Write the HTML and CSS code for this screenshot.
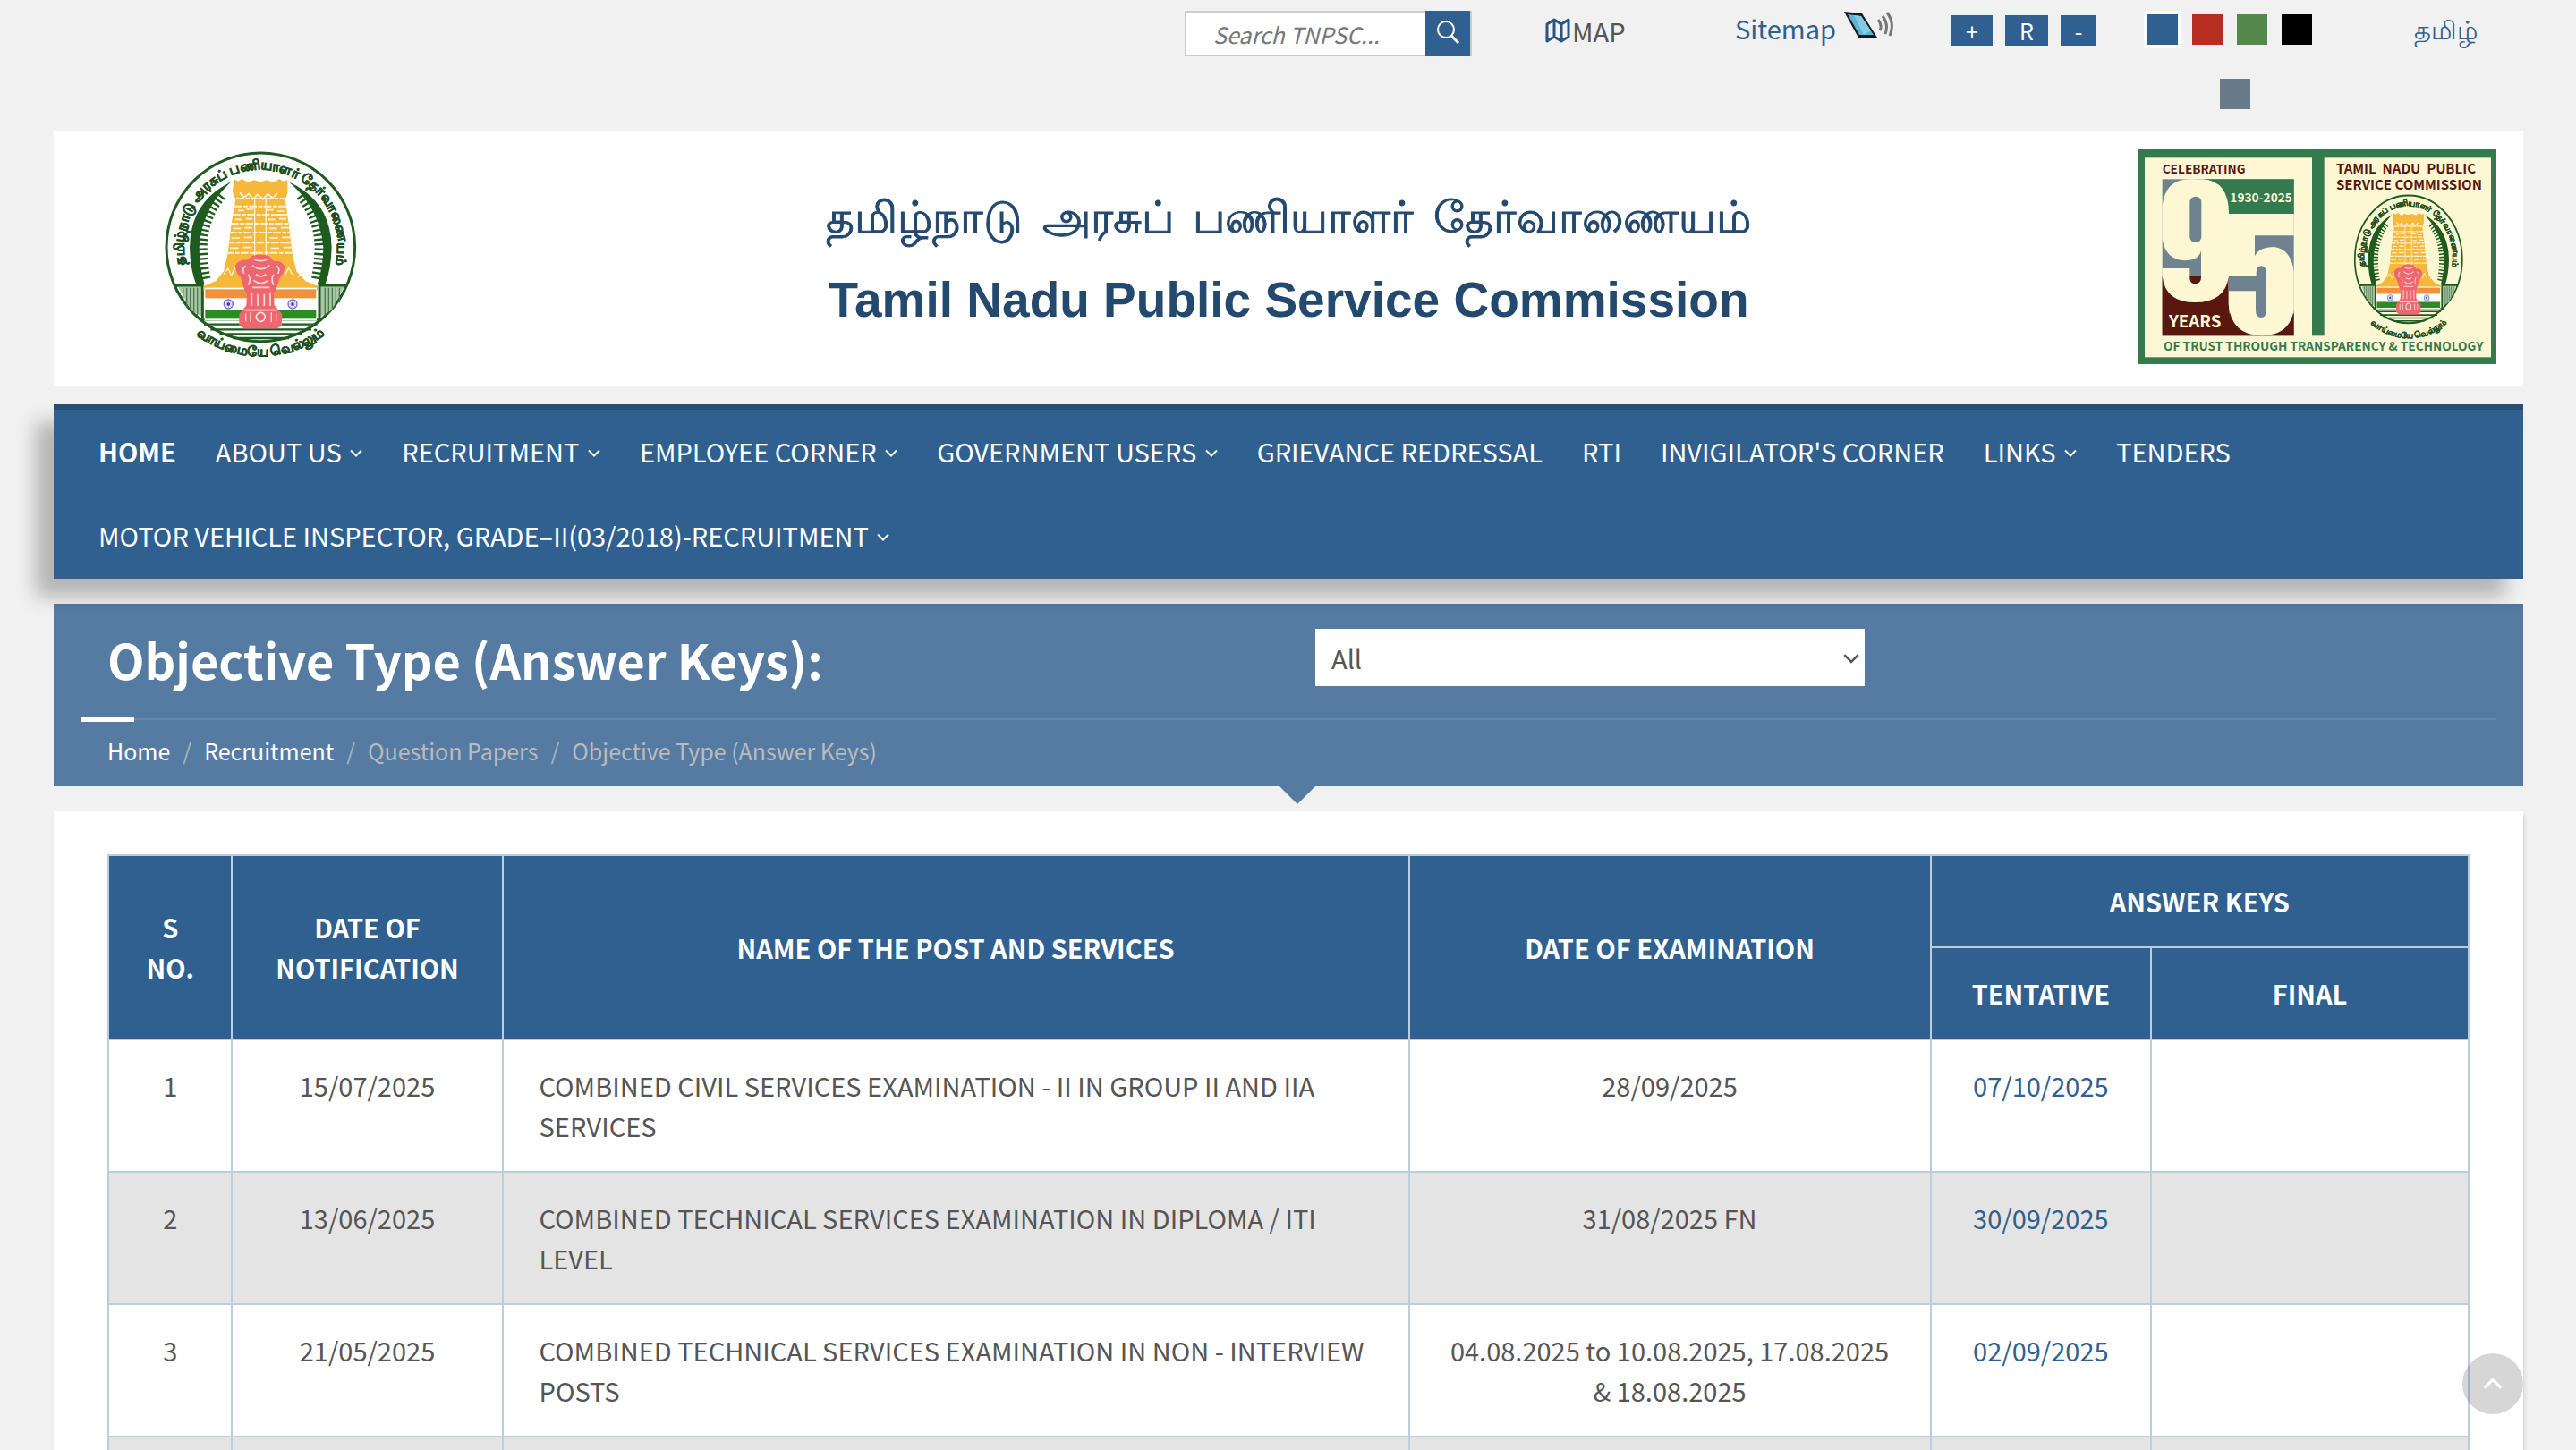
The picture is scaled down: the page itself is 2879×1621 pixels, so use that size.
FILE: index.html
```html
<!DOCTYPE html>
<html lang="en">
<head>
  <meta charset="UTF-8">
  <meta name="viewport" content="width=device-width, initial-scale=1.0">
  <title>TNPSC - Objective Type (Answer Keys)</title>
  <link rel="stylesheet" href="styles.css">
</head>
<body>

  <!-- shared drawings -->
  <svg class="defs" aria-hidden="true">
    <symbol id="chevron" viewBox="0 0 14 9">
      <path d="M1 1.500l6 6 6-6" fill="none" stroke="currentColor" stroke-width="2"/>
    </symbol>
    <symbol id="emblem" viewBox="60 45 672 720" preserveAspectRatio="none">
      <circle cx="394" cy="379" r="316" fill="none" stroke="#1f5b1f" stroke-width="9"/>
      <path d="M295 160Q158 225 156 380Q157 450 178 505H206Q188 440 188 380Q196 250 295 160ZM488 160Q630 225 632 380Q631 450 610 505H584Q604 440 604 380Q594 250 488 160Z" fill="#1f5b1f"/>
      <path d="M262 205Q200 280 198 380Q200 440 210 488M528 205Q590 280 592 380Q590 440 580 488" fill="none" stroke="#1f5b1f" stroke-width="34" stroke-dasharray="7 9"/>
      <path d="M106 508H200M590 508H682" stroke="#1f5b1f" stroke-width="9"/>
      <path d="M118 512H198V612L160 590ZM594 512H674L632 590L594 612Z" fill="#a9c4a6"/>
      <path d="M134 515v50M146 515v66M158 515v74M170 515v84M182 515v92M610 515v92M622 515v84M634 515v74M646 515v66M658 515v50" stroke="#4c7a49" stroke-width="4"/>
      <path d="M199 505V620M591 505V620" stroke="#1f5b1f" stroke-width="9"/>
      <path d="M188 622H330M464 622H600M204 638H330M464 638H584M226 655H564M256 670H532M300 684H490" stroke="#1f5b1f" stroke-width="7"/>
      <path d="M304 150l14 8 14-8 18 12 22-8 22 6 22-6 22 8 18-12 14 8 14-4v44l-8 22 12 80 12 100 14 60 30 32 42 18v14H202v-14l42-18 26-32 14-60 12-100 14-80-10-26Z" fill="#f6b83a"/>
      <path d="M312 216h162M306 242h174M300 270h188M294 300h204M288 330h214M282 364h226M278 398h232" stroke="#fff3cf" stroke-width="6" stroke-dasharray="26 5 14 4"/>
      <path d="M324 196l14 16 16-12 14 18 16-16 18 16 16-18 16 14 16-16M318 256h20M346 252h24M412 254h26M450 258h22M308 286h24M344 284h22M418 286h24M456 284h24M302 316h26M340 314h26M422 316h26M462 314h26M296 348h28M338 346h28M424 348h28M466 346h28M292 382h28M336 380h28M428 382h28M470 380h28" stroke="#fff6dd" stroke-width="5" fill="none"/>
      <path d="M374 220v190M412 220v190M270 470l14-20 12 24 14-30M500 470l-12-22-14 26M520 480l10-18" stroke="#fff3cf" stroke-width="4" fill="none"/>
      <rect x="206" y="515" width="376" height="110" fill="#ffffff"/>
      <rect x="208" y="520" width="372" height="30" fill="#f0923c"/>
      <rect x="208" y="590" width="372" height="29" fill="#2b8c22"/>
      <g fill="none" stroke="#6f70cf" stroke-width="4">
        <circle cx="286" cy="570" r="15"/><circle cx="501" cy="570" r="15"/>
        <path d="M272 570h28M286 556v28M276 560l20 20M296 560l-20 20M487 570h28M501 556v28M491 560l20 20M511 560l-20 20" stroke-width="2"/>
      </g>
      <circle cx="286" cy="570" r="5" fill="#35369b"/><circle cx="501" cy="570" r="5" fill="#35369b"/>
      <path d="M366 408q28-8 56 0l16 18q30-4 38 22l-8 22q-12 10-14 26l-10 26-6 14 2 38 26 30-2 38-14 10H338l-16-12v-36l24-30 2-38-8-14-10-30q-2-16-14-24l-8-24q10-26 40-22Z" fill="#ee6670"/>
      <path d="M372 420q22 10 44 0M366 440q28 24 58 0M344 442q-14 8-6 26M446 442q16 8 6 26M352 470q12 16 0 36M438 470q-12 16 0 36M378 470q16 14 34 0M370 490q24 20 50 0M366 514h58M364 530v46M384 536v40M406 536v40M426 530v46M340 590h108" fill="none" stroke="#ffd9da" stroke-width="5"/>
      <circle cx="394" cy="613" r="15" fill="#ee6670" stroke="#ffe3e3" stroke-width="5"/>
      <path d="M344 600v28M360 598v32M430 598v32M446 600v28" stroke="#ffd9da" stroke-width="4"/>
    </symbol>
  </svg>

  <div class="page">

    <div class="topbar">
      <form class="search" role="search">
        <input type="text" class="search-input" placeholder="Search TNPSC..." aria-label="Search TNPSC">
        <button type="button" class="search-btn" aria-label="Search">
          <svg width="28" height="28" viewBox="0 0 28 28"><circle cx="12" cy="11" r="9" fill="none" stroke="#fff" stroke-width="2"/><path d="M18 18l8 8" stroke="#fff" stroke-width="3"/></svg>
        </button>
      </form>

      <a href="#" class="map-link">
        <svg width="28" height="28" viewBox="0 0 28 28"><path d="M2 7l8-5 8 5 8-5v19l-8 5-8-5-8 5ZM10 2v19M18 7v19" fill="none" stroke="#2a557f" stroke-width="3" stroke-linejoin="round"/></svg>MAP
      </a>

      <div class="sitemap">
        <a href="#">Sitemap</a>
        <svg width="56" height="32" viewBox="0 0 56 32">
          <path d="M1 1L21 3 38 30H17Z" fill="#16181b"/>
          <path d="M5 4L20 6 34 27H18Z" fill="#5fb4d6"/>
          <path d="M12 5l8 1 11 16-8 5Z" fill="#86cbe4"/>
          <path d="M39 10q5 6 2 12M44 6q7 9 3 20M49 2q9 12 3 26" fill="none" stroke="#777" stroke-width="3"/>
        </svg>
      </div>

      <div class="font-size">
        <button type="button">+</button>
        <button type="button">R</button>
        <button type="button">-</button>
      </div>

      <div class="themes">
        <button type="button" class="swatch blue active" aria-label="Blue"></button>
        <button type="button" class="swatch red" aria-label="Red"></button>
        <button type="button" class="swatch green" aria-label="Green"></button>
        <button type="button" class="swatch black" aria-label="Black"></button>
        <button type="button" class="swatch gray" aria-label="Gray"></button>
      </div>

      <a href="#" class="lang" lang="ta">தமிழ்</a>
    </div>

    <header class="header">
      <svg class="emblem" viewBox="60 45 672 720" role="img" aria-label="Emblem">
        <use href="#emblem" x="60" y="45" width="672" height="720"/>
        <path id="arcTop" d="M155 475A258 258 0 1 1 633 475" fill="none"/>
        <path id="arcBottom" d="M120 620A365 365 0 0 0 668 620" fill="none"/>
        <text class="seal-text"><textPath href="#arcTop" startOffset="50%">தமிழ்நாடு அரசுப் பணியாளர் தேர்வாணையம்</textPath></text>
        <text class="seal-text"><textPath href="#arcBottom" startOffset="50%">வாய்மையே வெல்லும்</textPath></text>
      </svg>

      <div class="brand">
        <div class="brand-ta" lang="ta">தமிழ்நாடு &nbsp;அரசுப் &nbsp;பணியாளர் &nbsp;தேர்வாணையம்</div>
        <div class="brand-en">Tamil Nadu Public Service Commission</div>
      </div>

      <svg class="logo95" viewBox="60 50 1200 720" role="img" aria-label="Celebrating 95 years">
        <rect x="60" y="50" width="1200" height="720" fill="#35794f"/>
        <rect x="81" y="78" width="1161" height="669" fill="#fdf7d3"/>
        <rect x="642" y="70" width="41" height="605" fill="#35794f"/>
        <rect x="140" y="150" width="441" height="525" fill="#6e838f"/>
        <rect x="252" y="150" width="329" height="116" fill="#35794f"/>
        <path d="M140 475H363V600H581V675H140Z" fill="#5a170f"/>
        <path d="M140 240Q150 150 230 150H275Q363 156 363 265V475Q350 563 250 563Q150 563 140 475V449H232V485Q234 501 251 501Q270 500 270 480V390Q262 423 215 423Q150 420 140 350Z" fill="#fdf7d3"/>
        <rect x="232" y="208" width="39" height="154" rx="19" fill="#6e838f"/>
        <path d="M362 266H581V339H450V408Q465 377 515 377Q572 385 581 460V590Q565 675 472 675Q370 672 362 570Z" fill="#fdf7d3"/>
        <path d="M363 475H455V462Q457 441 472 441Q488 441 488 462V590Q488 614 472 614Q453 614 453 590V525H363Z" fill="#6e838f"/>
        <g class="logo-text">
          <text x="140" y="130" fill="#5a170f">CELEBRATING</text>
          <text x="367" y="228" fill="#fdf7d3">1930-2025</text>
          <text x="162" y="646" fill="#fdf7d3" class="years">YEARS</text>
          <text x="723" y="130" fill="#5a170f" class="org">TAMIL &#160;NADU &#160;PUBLIC</text>
          <text x="723" y="184" fill="#5a170f" class="org">SERVICE COMMISSION</text>
          <text x="144" y="726" fill="#35794f">OF TRUST THROUGH TRANSPARENCY &amp; TECHNOLOGY</text>
        </g>
        <use href="#emblem" x="775" y="192" width="383" height="488"/>
        <path id="ovalTop" d="M828 482A148 176 0 1 1 1102 482" fill="none"/>
        <path id="ovalBottom" d="M800 590A208 240 0 0 0 1130 590" fill="none"/>
        <text class="seal-text small"><textPath href="#ovalTop" startOffset="50%">தமிழ்நாடு அரசுப் பணியாளர் தேர்வாணையம்</textPath></text>
        <text class="seal-text small"><textPath href="#ovalBottom" startOffset="50%">வாய்மையே வெல்லும்</textPath></text>
      </svg>
    </header>

    <nav class="nav">
      <a href="#" class="active">HOME</a>
      <a href="#">ABOUT US <svg><use href="#chevron"/></svg></a>
      <a href="#">RECRUITMENT <svg><use href="#chevron"/></svg></a>
      <a href="#">EMPLOYEE CORNER <svg><use href="#chevron"/></svg></a>
      <a href="#">GOVERNMENT USERS <svg><use href="#chevron"/></svg></a>
      <a href="#">GRIEVANCE REDRESSAL</a>
      <a href="#">RTI</a>
      <a href="#">INVIGILATOR'S CORNER</a>
      <a href="#">LINKS <svg><use href="#chevron"/></svg></a>
      <a href="#">TENDERS</a>
      <a href="#">MOTOR VEHICLE INSPECTOR, GRADE–II(03/2018)-RECRUITMENT <svg><use href="#chevron"/></svg></a>
    </nav>

    <section class="page-title">
      <div class="title-row">
        <h1><label for="year">Objective Type (Answer Keys):</label></h1>
        <div class="select-wrap">
          <select id="year">
            <option>All</option>
          </select>
          <svg><use href="#chevron"/></svg>
        </div>
      </div>
      <ol class="breadcrumb">
        <li><a href="#">Home</a></li>
        <li><a href="#">Recruitment</a></li>
        <li>Question Papers</li>
        <li>Objective Type (Answer Keys)</li>
      </ol>
    </section>

    <main class="content">
      <table class="keys">
        <colgroup>
          <col class="c-no"><col class="c-date"><col class="c-name"><col class="c-exam"><col class="c-tent"><col class="c-final">
        </colgroup>
        <thead>
          <tr>
            <th rowspan="2">S NO.</th>
            <th rowspan="2">DATE OF NOTIFICATION</th>
            <th rowspan="2">NAME OF THE POST AND SERVICES</th>
            <th rowspan="2">DATE OF EXAMINATION</th>
            <th colspan="2">ANSWER KEYS</th>
          </tr>
          <tr>
            <th>TENTATIVE</th>
            <th>FINAL</th>
          </tr>
        </thead>
        <tbody>
          <tr>
            <td>1</td>
            <td>15/07/2025</td>
            <td class="name">COMBINED CIVIL SERVICES EXAMINATION - II IN GROUP II AND IIA SERVICES</td>
            <td>28/09/2025</td>
            <td><a href="#">07/10/2025</a></td>
            <td></td>
          </tr>
          <tr>
            <td>2</td>
            <td>13/06/2025</td>
            <td class="name">COMBINED TECHNICAL SERVICES EXAMINATION IN DIPLOMA / ITI LEVEL</td>
            <td>31/08/2025 FN</td>
            <td><a href="#">30/09/2025</a></td>
            <td></td>
          </tr>
          <tr>
            <td>3</td>
            <td>21/05/2025</td>
            <td class="name">COMBINED TECHNICAL SERVICES EXAMINATION IN NON - INTERVIEW POSTS</td>
            <td>04.08.2025 to 10.08.2025, 17.08.2025 &amp; 18.08.2025</td>
            <td><a href="#">02/09/2025</a></td>
            <td></td>
          </tr>
          <tr>
            <td></td>
            <td></td>
            <td class="name"></td>
            <td></td>
            <td></td>
            <td></td>
          </tr>
        </tbody>
      </table>
    </main>

  </div>

  <a href="#" class="to-top" aria-label="Back to top"><svg><use href="#chevron"/></svg></a>

</body>
</html>
```
FILE: styles.css
```css
* {
  box-sizing: border-box;
}
body {
  margin: 0;
  height: 100vh;
  overflow: hidden;
  background: #f1f1f1;
  color: #555;
  font-family: "Noto Sans CJK SC", "Noto Sans", sans-serif;
  font-size: 29px;
  line-height: 45px;
}
a {
  color: #2f6090;
  text-decoration: none;
}
button, input, select {
  font-family: inherit;
  border: 0;
  border-radius: 0;
  margin: 0;
  padding: 0;
}
.defs {
  display: none;
}
.page {
  padding: 0 59px 0 60px;
}

/* top bar */
.topbar {
  display: grid;
  grid-template-columns: 1264fr 403fr 212fr 242fr 215fr 302fr 122fr;
  height: 147px;
  padding-top: 12px;
  align-items: start;
}
.search {
  grid-column: 2;
  display: flex;
  width: 321px;
  height: 51px;
  background: #fff;
  border: 2px solid #ccc;
}
.search-input {
  flex: 1;
  min-width: 0;
  padding-left: 30px;
  background: none;
  color: #666;
  font-size: 25px;
  font-style: italic;
}
.search-input::placeholder {
  color: #777;
}
.search-btn {
  width: 50px;
  margin: -2px 0;
  background: #2f6090;
}
.map-link {
  display: flex;
  align-items: flex-start;
  gap: 2px;
  color: #555;
}
.map-link svg {
  margin-top: 8px;
}
.sitemap {
  display: flex;
  align-items: flex-start;
  gap: 8px;
}
.sitemap a {
  line-height: 38px;
}
.font-size {
  display: flex;
  gap: 14px;
  padding-top: 5px;
}
.font-size button {
  height: 34px;
  padding: 0 16px;
  background: #2f6090;
  color: #fff;
  font-size: 25px;
  line-height: 34px;
}
.themes {
  display: flex;
  flex-wrap: wrap;
  gap: 30px 8px;
  width: 204px;
}
.swatch {
  width: 42px;
  height: 42px;
  border: 4px solid #f1f1f1;
}
.swatch.active {
  border-color: #fff;
}
.blue { background: #2f6090; }
.red { background: #b72d20; }
.green { background: #54894b; }
.black { background: #000; }
.gray {
  margin: 0 auto;
  background: #677c88;
}
.lang {
  font-size: 29px;
  line-height: 38px;
}

/* header */
.header {
  display: grid;
  grid-template-columns: 1fr auto 1fr;
  height: 285px;
  padding: 18px 30px 0 120px;
  background: #fff;
}
.emblem {
  width: 224px;
  height: 240px;
}
.logo95 {
  width: 400px;
  height: 240px;
  margin-top: 2px;
  justify-self: end;
}
.seal-text {
  font-size: 46px;
  font-weight: bold;
  fill: #1f4f1f;
  stroke: #1f4f1f;
  stroke-width: 2px;
  text-anchor: middle;
}
.seal-text.small {
  font-size: 28px;
  stroke-width: 1px;
}
.logo-text {
  font-family: "Noto Sans CJK SC", sans-serif;
  font-size: 41px;
  font-weight: bold;
}
.logo-text .org {
  font-size: 45px;
}
.logo-text .years {
  font-size: 56px;
}
.brand {
  margin-right: 90px;
  padding-top: 34px;
  color: #24496f;
  text-align: center;
  white-space: nowrap;
}
.brand-ta {
  font-size: 49px;
  line-height: 80px;
  -webkit-text-stroke: 1px #24496f;
}
.brand-en {
  padding-top: 16px;
  font-family: "Liberation Sans", Arial, sans-serif;
  font-size: 55px;
  font-weight: bold;
  line-height: 80px;
}

/* navigation */
.nav {
  display: flex;
  flex-wrap: wrap;
  margin-top: 20px;
  padding: 0 50px 3px;
  gap: 2px 44px;
  background: #2f6090;
  border-top: 6px solid #264d72;
  box-shadow: -20px 20px 20px rgba(0, 0, 0, 0.25);
}
.nav a {
  color: #fff;
  line-height: 92px;
}
.nav .active {
  font-weight: bold;
}
.nav svg {
  width: 14px;
  height: 9px;
  margin-left: 3px;
  vertical-align: 6px;
}

/* page title */
.page-title {
  position: relative;
  margin-top: 28px;
  height: 204px;
  padding: 0 30px;
  background: #567ba3;
  box-shadow: inset 0 10px 10px -8px rgba(0, 0, 0, 0.1);
}
.page-title::after {
  content: "";
  position: absolute;
  left: 50.4%;
  top: 100%;
  margin-left: -21px;
  border: 20px solid transparent;
  border-top-color: #567ba3;
  border-bottom: 0;
}
.title-row {
  position: relative;
  display: grid;
  grid-template-columns: 1fr 1fr;
  height: 130px;
  padding: 28px 0 0 30px;
  border-bottom: 2px solid #6788ad;
}
.title-row::after {
  content: "";
  position: absolute;
  left: 0;
  bottom: -4px;
  width: 60px;
  height: 6px;
  background: #fff;
}
h1 {
  margin: 0;
  color: #fff;
  font-size: 54px;
  line-height: 68px;
}
.select-wrap {
  position: relative;
  width: 46%;
  height: 64px;
  margin-left: 15px;
}
.select-wrap select {
  width: 100%;
  height: 64px;
  padding-left: 18px;
  appearance: none;
  background: #fff;
  color: #555;
  font-size: 29px;
}
.select-wrap svg {
  position: absolute;
  right: 6px;
  top: 27px;
  width: 18px;
  height: 12px;
}
.breadcrumb {
  display: flex;
  margin: 0;
  padding: 12px 30px;
  list-style: none;
  color: #bbb;
  font-size: 25px;
}
.breadcrumb a {
  color: #fff;
}
.breadcrumb li + li::before {
  content: "/";
  padding: 0 14px;
  color: #a3b4c8;
}

/* answer keys table */
.content {
  margin-top: 28px;
  padding: 48px 60px 60px;
  background: #fff;
  box-shadow: 2px 4px 4px rgba(0, 0, 0, 0.1);
}
.keys {
  width: 100%;
  table-layout: fixed;
  border-collapse: collapse;
}
.c-no { width: 5.25%; }
.c-date { width: 11.45%; }
.c-name { width: 38.4%; }
.c-exam { width: 22.1%; }
.c-tent { width: 9.35%; }
.c-final { width: 13.45%; }
.keys th, .keys td {
  padding: 28px 40px;
  border: 2px solid #bccddd;
  text-align: center;
}
.keys th {
  background: #2f6090;
  color: #fff;
}
.keys td {
  vertical-align: top;
}
.keys .name {
  text-align: left;
}
.keys tbody tr:nth-child(even) {
  background: #e4e4e4;
}

.to-top {
  position: fixed;
  right: 59px;
  bottom: 40px;
  display: flex;
  align-items: center;
  justify-content: center;
  width: 68px;
  height: 68px;
  border-radius: 50%;
  background: rgba(90, 90, 90, 0.25);
  color: #fff;
}
.to-top svg {
  width: 22px;
  height: 14px;
  transform: rotate(180deg);
}
```
